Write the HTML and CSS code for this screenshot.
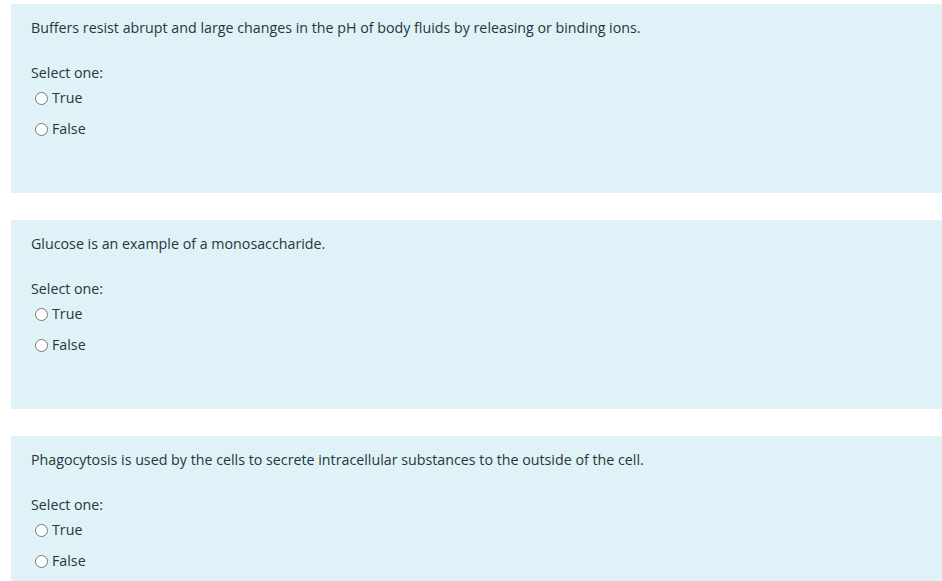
FILE: index.html
```html
<!DOCTYPE html>
<html>
<head>
<meta charset="utf-8">
<link rel="stylesheet" href="styles.css">
</head>
<body>
<div class="page">
  <div class="que">
    <div class="qtext">Buffers resist abrupt and large changes in the pH of body fluids by releasing or binding ions.</div>
    <div class="prompt">Select one:</div>
    <div class="answers">
      <label class="opt"><span class="radio"></span><span>True</span></label>
      <label class="opt"><span class="radio"></span><span>False</span></label>
    </div>
  </div>
  <div class="que">
    <div class="qtext">Glucose is an example of a monosaccharide.</div>
    <div class="prompt">Select one:</div>
    <div class="answers">
      <label class="opt"><span class="radio"></span><span>True</span></label>
      <label class="opt"><span class="radio"></span><span>False</span></label>
    </div>
  </div>
  <div class="que last">
    <div class="qtext">Phagocytosis is used by the cells to secrete intracellular substances to the outside of the cell.</div>
    <div class="prompt">Select one:</div>
    <div class="answers">
      <label class="opt"><span class="radio"></span><span>True</span></label>
      <label class="opt"><span class="radio"></span><span>False</span></label>
    </div>
  </div>
</div>
</body>
</html>
```
FILE: styles.css
```css
html, body {
  margin: 0;
  padding: 0;
  background: #ffffff;
}
body {
  font-family: "Open Sans", "Noto Sans", sans-serif;
  font-size: 14.25px;
  color: #2a3538;
}
.page {
  padding: 4px 0 0 11px;
  height: 581px;
  box-sizing: border-box;
  overflow: hidden;
}
.que {
  background: #def2f8;
  height: 189px;
  margin-bottom: 27px;
  padding: 14px 20px 0 20px;
  box-sizing: border-box;
}
.que.last {
  height: 145px;
  margin-bottom: 0;
}
.qtext {
  line-height: 20px;
  height: 20px;
}
.prompt {
  margin-top: 25px;
  line-height: 20px;
  height: 20px;
}
.answers {
  margin-top: 5px;
  display: flex;
  flex-direction: column;
  gap: 11px;
}
.opt {
  display: flex;
  align-items: center;
  height: 20px;
  line-height: 20px;
  padding-left: 4px;
  gap: 4px;
}
.radio {
  width: 13px;
  height: 13px;
  box-sizing: border-box;
  border: 1px solid #767676;
  border-radius: 50%;
  background: #ffffff;
  flex: none;
}
```
